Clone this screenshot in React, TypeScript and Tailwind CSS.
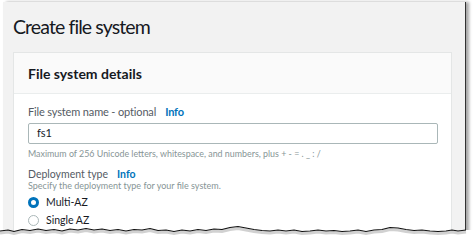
import React from "react";

// torn paper edge along the bottom of the screenshot
const tear = [
  [0, 231], [8, 230], [14, 231.5], [22, 229.5], [30, 230.5], [38, 229], [46, 230.5], [54, 229.5],
  [62, 231], [70, 229], [78, 230], [86, 228.5], [94, 230], [102, 229], [110, 230.5], [118, 229.5],
  [126, 231], [134, 229.5], [142, 230], [150, 228.5], [158, 230.5], [166, 230], [174, 231.5],
  [182, 230], [190, 231], [198, 229.5], [206, 230.5], [214, 229], [222, 229.5], [230, 227.5],
  [238, 226.5], [246, 228], [254, 229.5], [262, 230.5], [270, 231], [278, 230], [286, 231],
  [294, 230], [302, 231.5], [310, 231], [318, 230], [326, 231], [334, 230.5], [342, 231.5],
  [350, 231], [358, 230], [366, 231.5], [374, 230], [382, 229.5], [390, 227.5], [398, 228],
  [406, 229.5], [414, 230.5], [422, 230], [430, 231], [438, 231.5], [446, 231], [452, 230],
  [458, 231], [466, 230],
];

function TornEdge() {
  const line = tear.map(([x, y]) => `${x},${y}`).join(" ");
  const shade = tear.map(([x, y]) => `${x},${y + 2}`).join(" ");
  return (
    <svg className="absolute left-0 top-0 pointer-events-none" width="474" height="242" viewBox="0 0 474 242">
      <polygon points={`${line} 474,230 474,242 0,242`} fill="#ffffff" />
      <polyline points={shade} fill="none" stroke="#000" strokeOpacity="0.18" strokeWidth="3" />
      <polyline points={line} fill="none" stroke="#111" strokeWidth="1.1" />
    </svg>
  );
}

function Info() {
  return <span className="ml-[9px] font-bold text-[#0073bb]">Info</span>;
}

export default function App() {
  return (
    <div
      className="relative w-[474px] h-[242px] overflow-hidden bg-white"
      style={{ fontFamily: 'Lato, "Open Sans", Arial, sans-serif' }}
    >
      <div className="ml-[3px] mt-[2px] w-[463px] h-[240px] bg-[#f2f2f2] border-r border-[#333] shadow-[3px_0_3px_rgba(0,0,0,0.35)] pl-[10px] pr-[13px]">
        <h1 className="pt-[11px] h-[50px] text-[19.5px] leading-[28px] tracking-[-0.9px] text-[#16191f]">
          Create file system
        </h1>

        <div className="border border-[#e4e6e6] bg-white">
          <div className="h-[41px] bg-[#fafafa] border-b border-[#eaeded] px-[14px] flex items-center">
            <h2 className="text-[14px] font-bold text-[#16191f]">File system details</h2>
          </div>

          <div className="px-[14px] pt-[10px] pb-4">
            <div className="text-[11px] leading-[16px] tracking-[-0.15px] text-[#545b64]">
              File system name - optional
              <Info />
            </div>
            <div className="mt-[3px] h-[21px] w-[410px] border border-[#aab7b8] rounded-[2px] px-[8px] flex items-center text-[11px] text-[#16191f]">
              fs1
            </div>
            <div className="mt-[3px] text-[8.9px] leading-[14px] text-[#879596]">
              Maximum of 256 Unicode letters, whitespace, and numbers, plus + - = . _ : /
            </div>

            <div className="mt-[5px] text-[10.5px] leading-[16px] text-[#545b64]">
              Deployment type
              <Info />
            </div>
            <div className="-mt-[2px] text-[9px] leading-[12px] text-[#879596]">
              Specify the deployment type for your file system.
            </div>

            <div className="mt-[3px] flex flex-col gap-[4px]">
              <label className="flex items-center gap-[7px] text-[10.5px] leading-[14px] text-[#16191f]">
                <span className="w-[11px] h-[11px] rounded-full border-[3px] border-[#0073bb] bg-white" />
                Multi-AZ
              </label>
              <label className="flex items-center gap-[7px] text-[10.5px] leading-[14px] text-[#16191f]">
                <span className="w-[11px] h-[11px] rounded-full border border-[#aab7b8] bg-white" />
                Single AZ
              </label>
            </div>
          </div>
        </div>
      </div>
      <TornEdge />
    </div>
  );
}
